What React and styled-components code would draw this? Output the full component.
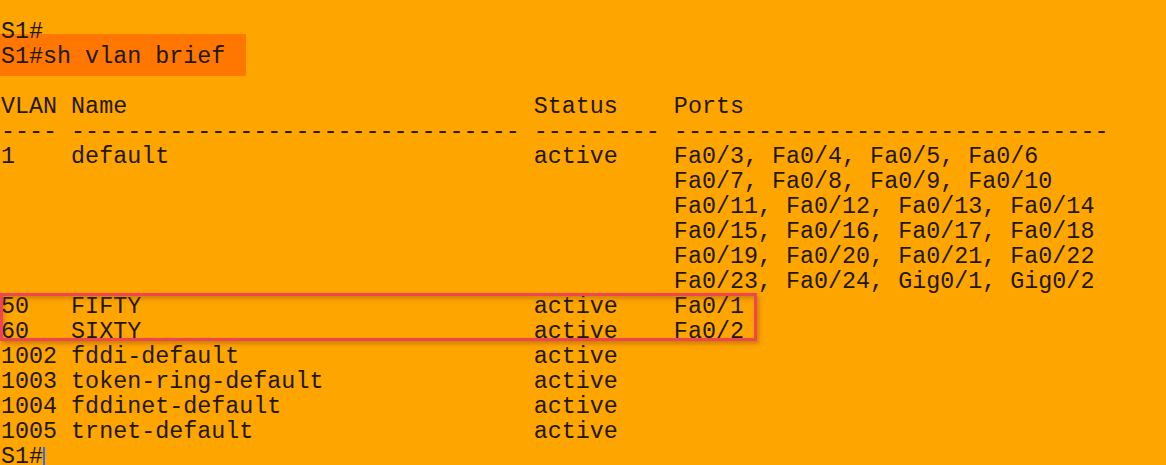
import React from "react";
import styled, { createGlobalStyle } from "styled-components";

const Global = createGlobalStyle`
  html, body {
    margin: 0;
    padding: 0;
    background: #ffa500;
    overflow: hidden;
  }
`;

const Terminal = styled.div`
  width: 1166px;
  height: 465px;
  box-sizing: border-box;
  padding: 20px 0 0 1px;
  background: #ffa500;
  color: #221700;
  font-family: "Liberation Mono", "Courier New", monospace;
  font-size: 23.36px;
  line-height: 25px;
  overflow: hidden;
`;

const Line = styled.div`
  white-space: pre;
  height: 25px;
`;

const Highlight = styled.div`
  white-space: pre;
  width: 245px;
  height: 25px;
  margin: -11px 0 -6px -1px;
  padding: 11px 0 6px 1px;
  background: #ff7700;
`;

const RedBox = styled.div`
  position: relative;
  &::after {
    content: "";
    position: absolute;
    left: -1px;
    top: -2px;
    width: 757px;
    height: 48px;
    box-sizing: border-box;
    border: 3px solid #ef4452;
    box-shadow: 2px 3px 4px rgba(120, 60, 0, 0.35),
      inset 2px 3px 4px rgba(120, 60, 0, 0.3);
    pointer-events: none;
  }
`;

const Cursor = styled.span`
  display: inline-block;
  width: 2px;
  height: 22px;
  background: #2f6bff;
  vertical-align: -6px;
`;

const row = (vlan, name, status, ports) =>
  vlan.padEnd(5) + name.padEnd(33) + status.padEnd(10) + ports;

const cont = (ports) => " ".repeat(48) + ports;

export default function App() {
  return (
    <>
      <Global />
      <Terminal>
        <Line>S1#</Line>
        <Highlight>S1#sh vlan brief</Highlight>
        <Line> </Line>
        <Line>{row("VLAN", "Name", "Status", "Ports")}</Line>
        <Line>
          {"---- " +
            "-".repeat(32) +
            " " +
            "-".repeat(9) +
            " " +
            "-".repeat(31)}
        </Line>
        <Line>{row("1", "default", "active", "Fa0/3, Fa0/4, Fa0/5, Fa0/6")}</Line>
        <Line>{cont("Fa0/7, Fa0/8, Fa0/9, Fa0/10")}</Line>
        <Line>{cont("Fa0/11, Fa0/12, Fa0/13, Fa0/14")}</Line>
        <Line>{cont("Fa0/15, Fa0/16, Fa0/17, Fa0/18")}</Line>
        <Line>{cont("Fa0/19, Fa0/20, Fa0/21, Fa0/22")}</Line>
        <Line>{cont("Fa0/23, Fa0/24, Gig0/1, Gig0/2")}</Line>
        <RedBox>
          <Line>{row("50", "FIFTY", "active", "Fa0/1")}</Line>
          <Line>{row("60", "SIXTY", "active", "Fa0/2")}</Line>
        </RedBox>
        <Line>{row("1002", "fddi-default", "active", "")}</Line>
        <Line>{row("1003", "token-ring-default", "active", "")}</Line>
        <Line>{row("1004", "fddinet-default", "active", "")}</Line>
        <Line>{row("1005", "trnet-default", "active", "")}</Line>
        <Line>
          S1#
          <Cursor />
        </Line>
      </Terminal>
    </>
  );
}
